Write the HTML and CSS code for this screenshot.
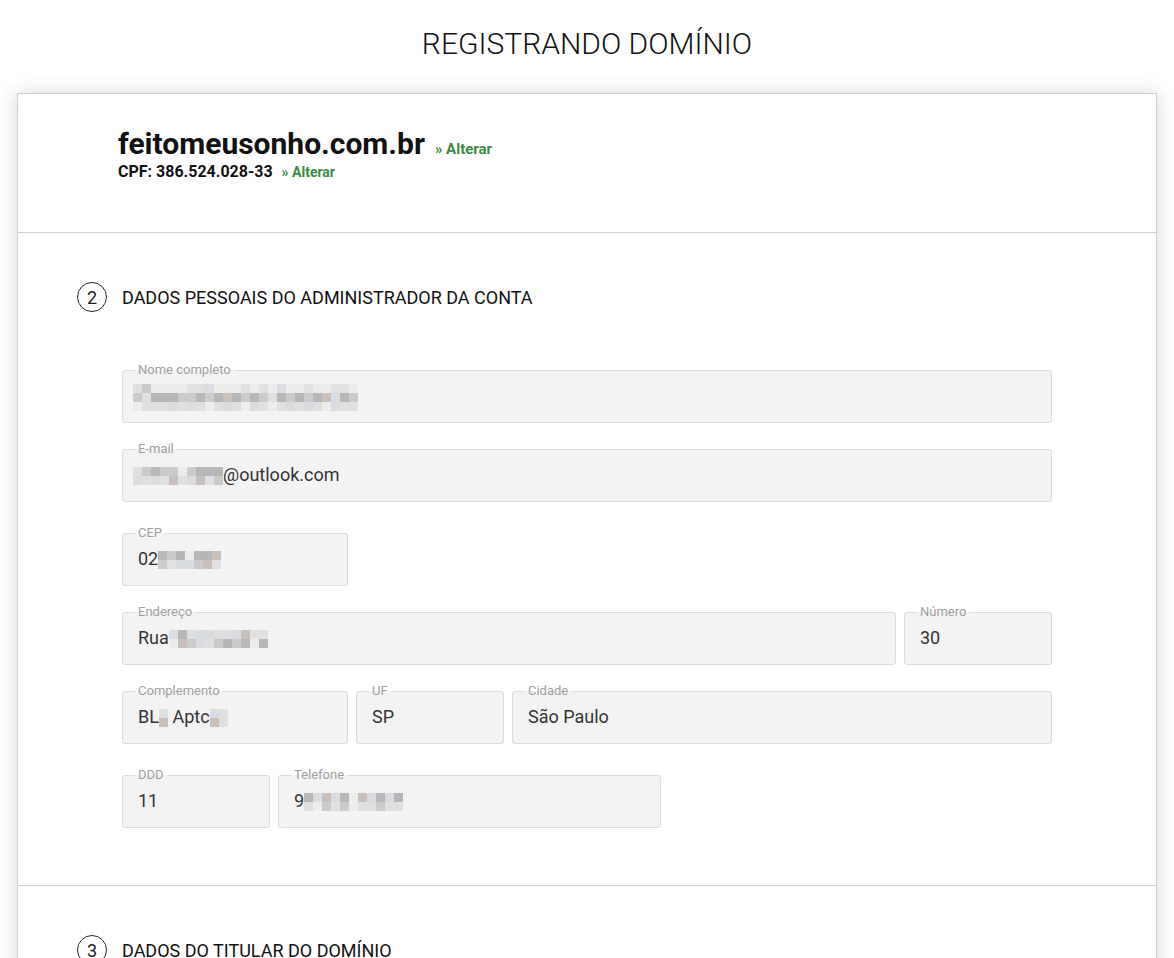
FILE: index.html
```html
<!DOCTYPE html>
<html lang="pt-BR">
<head>
<meta charset="utf-8">
<title>Registrando domínio</title>
<link rel="stylesheet" href="styles.css">
</head>
<body>
<h1 class="page-title">REGISTRANDO DOMÍNIO</h1>
<div class="card">
  <div class="card-head">
    <div class="domain-line"><span class="domain">feitomeusonho.com.br</span> <a class="alterar big" href="#">» Alterar</a></div>
    <div class="cpf-line"><span class="cpf">CPF: 386.524.028-33</span> <a class="alterar" href="#">» Alterar</a></div>
  </div>

  <div class="section">
    <div class="sec-heading"><span class="num">2</span><span class="sec-title">DADOS PESSOAIS DO ADMINISTRADOR DA CONTA</span></div>

    <div class="row">
      <fieldset class="field full"><legend>Nome completo</legend>
        <div class="value"><span class="blur three shift"><i class="a"></i><i class="b"></i><i class="w"></i><i class="b"></i><i class="a"></i><i class="a"></i><i class="w"></i><i class="c"></i><i class="a"></i><i class="w"></i><i class="c"></i><i class="a"></i><i class="w"></i><i class="c"></i><i class="e"></i><i class="w"></i><i class="b"></i><i class="a"></i><i class="a"></i><i class="b"></i><i class="e"></i><i class="a"></i><i class="c"></i><i class="a"></i><i class="e"></i><i class="b"></i><i class="w"></i><i class="w"></i><i class="c"></i><i class="a"></i><i class="w"></i><i class="d"></i><i class="e"></i><i class="w"></i><i class="c"></i><i class="a"></i><i class="a"></i><i class="b"></i><i class="w"></i><i class="w"></i><i class="c"></i><i class="e"></i><i class="a"></i><i class="b"></i><i class="a"></i><i class="w"></i><i class="a"></i><i class="w"></i><i class="e"></i><i class="c"></i><i class="a"></i><i class="w"></i><i class="b"></i><i class="e"></i><i class="w"></i><i class="c"></i><i class="a"></i><i class="a"></i><i class="b"></i><i class="e"></i><i class="w"></i><i class="c"></i><i class="a"></i><i class="w"></i><i class="d"></i><i class="w"></i><i class="a"></i><i class="e"></i><i class="e"></i><i class="a"></i><i class="c"></i><i class="a"></i><i class="w"></i><i class="b"></i><i class="a"></i></span></div>
      </fieldset>
    </div>
    <div class="row group-end">
      <fieldset class="field full"><legend>E-mail</legend>
        <div class="value"><span class="blur shift"><i class="a"></i><i class="e"></i><i class="b"></i><i class="a"></i><i class="c"></i><i class="e"></i><i class="b"></i><i class="a"></i><i class="b"></i><i class="d"></i><i class="w"></i><i class="a"></i><i class="b"></i><i class="e"></i><i class="c"></i><i class="d"></i><i class="c"></i><i class="a"></i><i class="c"></i><i class="b"></i></span>@outlook.com</div>
      </fieldset>
    </div>

    <div class="row">
      <fieldset class="field w226"><legend>CEP</legend>
        <div class="value">02<span class="blur"><i class="c"></i><i class="b"></i><i class="b"></i><i class="a"></i><i class="c"></i><i class="e"></i><i class="w"></i><i class="e"></i><i class="c"></i><i class="b"></i><i class="c"></i><i class="d"></i><i class="d"></i><i class="a"></i></span></div>
      </fieldset>
    </div>
    <div class="row">
      <fieldset class="field grow"><legend>Endereço</legend>
        <div class="value">Rua<span class="blur"><i class="e"></i><i class="w"></i><i class="c"></i><i class="d"></i><i class="a"></i><i class="b"></i><i class="e"></i><i class="e"></i><i class="e"></i><i class="a"></i><i class="a"></i><i class="b"></i><i class="a"></i><i class="c"></i><i class="e"></i><i class="b"></i><i class="d"></i><i class="c"></i><i class="a"></i><i class="w"></i><i class="a"></i><i class="c"></i></span></div>
      </fieldset>
      <fieldset class="field w148"><legend>Número</legend>
        <div class="value">30</div>
      </fieldset>
    </div>
    <div class="row group-end">
      <fieldset class="field w226"><legend>Complemento</legend>
        <div class="value">BL<span class="blur"><i class="a"></i><i class="d"></i></span> Aptc<span class="blur"><i class="e"></i><i class="d"></i><i class="a"></i><i class="a"></i></span></div>
      </fieldset>
      <fieldset class="field w148"><legend>UF</legend>
        <div class="value">SP</div>
      </fieldset>
      <fieldset class="field grow"><legend>Cidade</legend>
        <div class="value">São Paulo</div>
      </fieldset>
    </div>

    <div class="row">
      <fieldset class="field w148"><legend>DDD</legend>
        <div class="value">11</div>
      </fieldset>
      <fieldset class="field w383"><legend>Telefone</legend>
        <div class="value">9<span class="blur"><i class="c"></i><i class="a"></i><i class="e"></i><i class="w"></i><i class="d"></i><i class="b"></i><i class="e"></i><i class="a"></i><i class="c"></i><i class="b"></i><i class="w"></i><i class="w"></i><i class="d"></i><i class="a"></i><i class="e"></i><i class="a"></i><i class="c"></i><i class="b"></i><i class="e"></i><i class="a"></i><i class="c"></i><i class="a"></i></span></div>
      </fieldset>
    </div>
  </div>

  <div class="section">
    <div class="sec-heading"><span class="num">3</span><span class="sec-title">DADOS DO TITULAR DO DOMÍNIO</span></div>
  </div>
</div>
</body>
</html>
```
FILE: styles.css
```css
html, body {
  margin: 0;
  padding: 0;
  background: #fff;
  font-family: Roboto, "Liberation Sans", Arial, sans-serif;
  color: #222;
}

.page-title {
  margin: 0;
  padding-top: 26px;
  height: 93px;
  box-sizing: border-box;
  text-align: center;
  font-weight: 300;
  font-size: 30px;
  line-height: 35px;
  color: #111;
}

.card {
  width: 1140px;
  box-sizing: border-box;
  margin: 0 auto;
  border: 1px solid #cfcfcf;
  border-bottom: none;
  background: #fff;
  box-shadow: 0 0 18px rgba(0, 0, 0, 0.16);
}

.card-head {
  padding: 32px 100px 50px;
  border-bottom: 1px solid #cfcfcf;
}

.domain-line {
  line-height: 35px;
  height: 35px;
  white-space: nowrap;
}

.domain {
  font-size: 30px;
  font-weight: 700;
  color: #111;
}

.alterar {
  color: #3b8a45;
  font-weight: 700;
  font-size: 14px;
  text-decoration: none;
  margin-left: 5px;
}

.alterar.big {
  font-size: 15px;
  margin-left: 6px;
}

.cpf-line {
  margin-top: 1px;
  line-height: 19px;
  white-space: nowrap;
}

.cpf {
  font-size: 16px;
  font-weight: 700;
  color: #111;
}

.section {
  padding: 48px 104px 57px 59px;
  border-bottom: 1px solid #cfcfcf;
}

.section:last-child {
  border-bottom: none;
  padding-bottom: 60px;
}

.sec-heading {
  display: flex;
  align-items: center;
  gap: 15px;
  height: 32px;
  margin-bottom: 50px;
}

.num {
  width: 28px;
  height: 28px;
  border: 1px solid #222;
  border-radius: 50%;
  display: flex;
  align-items: center;
  justify-content: center;
  font-size: 18px;
  color: #222;
}

.sec-title {
  font-size: 18px;
  color: #111;
}

.row {
  display: flex;
  gap: 8px;
  margin-left: 45px;
  width: 930px;
  margin-bottom: 19px;
}

.row.group-end {
  margin-bottom: 24px;
}

.row:last-child {
  margin-bottom: 0;
}

.field {
  margin: 0;
  padding: 0 12px;
  border: 1px solid #dcdcdc;
  border-radius: 3px;
  background: #f3f3f3;
  box-sizing: border-box;
  min-width: 0;
}

.field legend {
  font-size: 13px;
  line-height: 14px;
  color: #a0a0a0;
  padding: 0 3px;
}

.field .value {
  height: 45px;
  line-height: 37px;
  padding-left: 3px;
  font-size: 18px;
  color: #333;
  white-space: nowrap;
}

.full { width: 930px; }
.w226 { width: 226px; }
.w148 { width: 148px; }
.w383 { width: 383px; }
.grow { flex: 1; }

.blur {
  display: inline-grid;
  grid-template-rows: repeat(2, 9px);
  grid-auto-flow: column;
  grid-auto-columns: 9px;
  vertical-align: middle;
}

.blur.three {
  grid-template-rows: repeat(3, 9px);
}

.blur.shift {
  margin-left: -5px;
}

.blur i {
  display: block;
}

.blur .w { background: #ececec; }
.blur .a { background: #e0e0e0; }
.blur .b { background: #cbcbcb; }
.blur .c { background: #b7b7b7; }
.blur .d { background: #c9c0bc; }
.blur .e { background: #d9dce1; }
```
